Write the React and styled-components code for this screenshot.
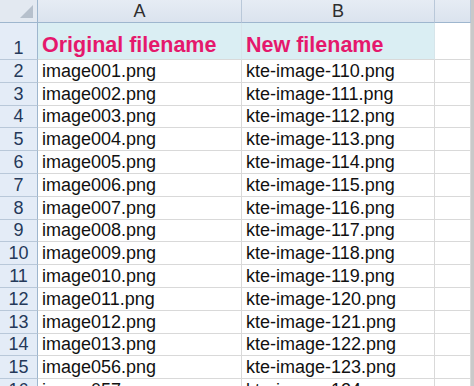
import React from 'react';
import styled, { createGlobalStyle } from 'styled-components';

const GlobalStyle = createGlobalStyle`
  html, body {
    margin: 0;
    padding: 0;
    background: #ffffff;
    overflow: hidden;
  }
`;

const Sheet = styled.div`
  display: grid;
  grid-template-columns: 38px 204px 193px 36px;
  grid-template-rows: 23px 37px repeat(15, 22.8px);
  width: 471px;
  height: 386px;
  overflow: hidden;
  border-right: 3px solid #c9c9c9;
  font-family: "Liberation Sans", Arial, sans-serif;
`;

const Corner = styled.div`
  position: relative;
  background: #e3e9f1;
  border-right: 1px solid #9eb6ce;
  border-bottom: 1px solid #9eb6ce;
  box-sizing: border-box;

  &::after {
    content: '';
    position: absolute;
    right: 4px;
    bottom: 4px;
    width: 0;
    height: 0;
    border-left: 13px solid transparent;
    border-bottom: 13px solid #b6c0cc;
  }
`;

const ColHeader = styled.div`
  display: flex;
  align-items: center;
  justify-content: center;
  background: linear-gradient(#e6ecf4, #dbe3ee);
  border-right: 1px solid #b9c8d9;
  border-bottom: 1px solid #9eb6ce;
  box-sizing: border-box;
  color: #2e2e2e;
  font-size: 18px;
  padding-top: 1px;
`;

const RowHeader = styled.div`
  display: flex;
  align-items: flex-end;
  justify-content: center;
  background: #e4ecf7;
  border-right: 1px solid #9eb6ce;
  border-bottom: 1px solid #b9c8d9;
  box-sizing: border-box;
  color: #25395a;
  font-size: 18px;
  line-height: 21px;
`;

const Cell = styled.div`
  display: flex;
  align-items: flex-end;
  padding-left: 4px;
  background: ${props => (props.$title ? '#daeef3' : '#ffffff')};
  border-right: 1px solid ${props => (props.$title ? '#d6e5ea' : '#d9d9d9')};
  border-bottom: 1px solid #d9d9d9;
  box-sizing: border-box;
  color: ${props => (props.$title ? '#e5186c' : '#111111')};
  font-size: ${props => (props.$title ? '21.5px' : '18px')};
  font-weight: ${props => (props.$title ? 'bold' : 'normal')};
  line-height: ${props => (props.$title ? '28px' : '21px')};
  white-space: nowrap;
  overflow: hidden;
`;

const rows = [
  ['image001.png', 'kte-image-110.png'],
  ['image002.png', 'kte-image-111.png'],
  ['image003.png', 'kte-image-112.png'],
  ['image004.png', 'kte-image-113.png'],
  ['image005.png', 'kte-image-114.png'],
  ['image006.png', 'kte-image-115.png'],
  ['image007.png', 'kte-image-116.png'],
  ['image008.png', 'kte-image-117.png'],
  ['image009.png', 'kte-image-118.png'],
  ['image010.png', 'kte-image-119.png'],
  ['image011.png', 'kte-image-120.png'],
  ['image012.png', 'kte-image-121.png'],
  ['image013.png', 'kte-image-122.png'],
  ['image056.png', 'kte-image-123.png'],
  ['image057.png', 'kte-image-124.png'],
];

export default function App() {
  return (
    <>
      <GlobalStyle />
      <Sheet>
        <Corner />
        <ColHeader>A</ColHeader>
        <ColHeader>B</ColHeader>
        <ColHeader />

        <RowHeader>1</RowHeader>
        <Cell $title>Original filename</Cell>
        <Cell $title>New filename</Cell>
        <Cell />

        {rows.map(([oldName, newName], i) => (
          <React.Fragment key={oldName}>
            <RowHeader>{i + 2}</RowHeader>
            <Cell>{oldName}</Cell>
            <Cell>{newName}</Cell>
            <Cell />
          </React.Fragment>
        ))}
      </Sheet>
    </>
  );
}
